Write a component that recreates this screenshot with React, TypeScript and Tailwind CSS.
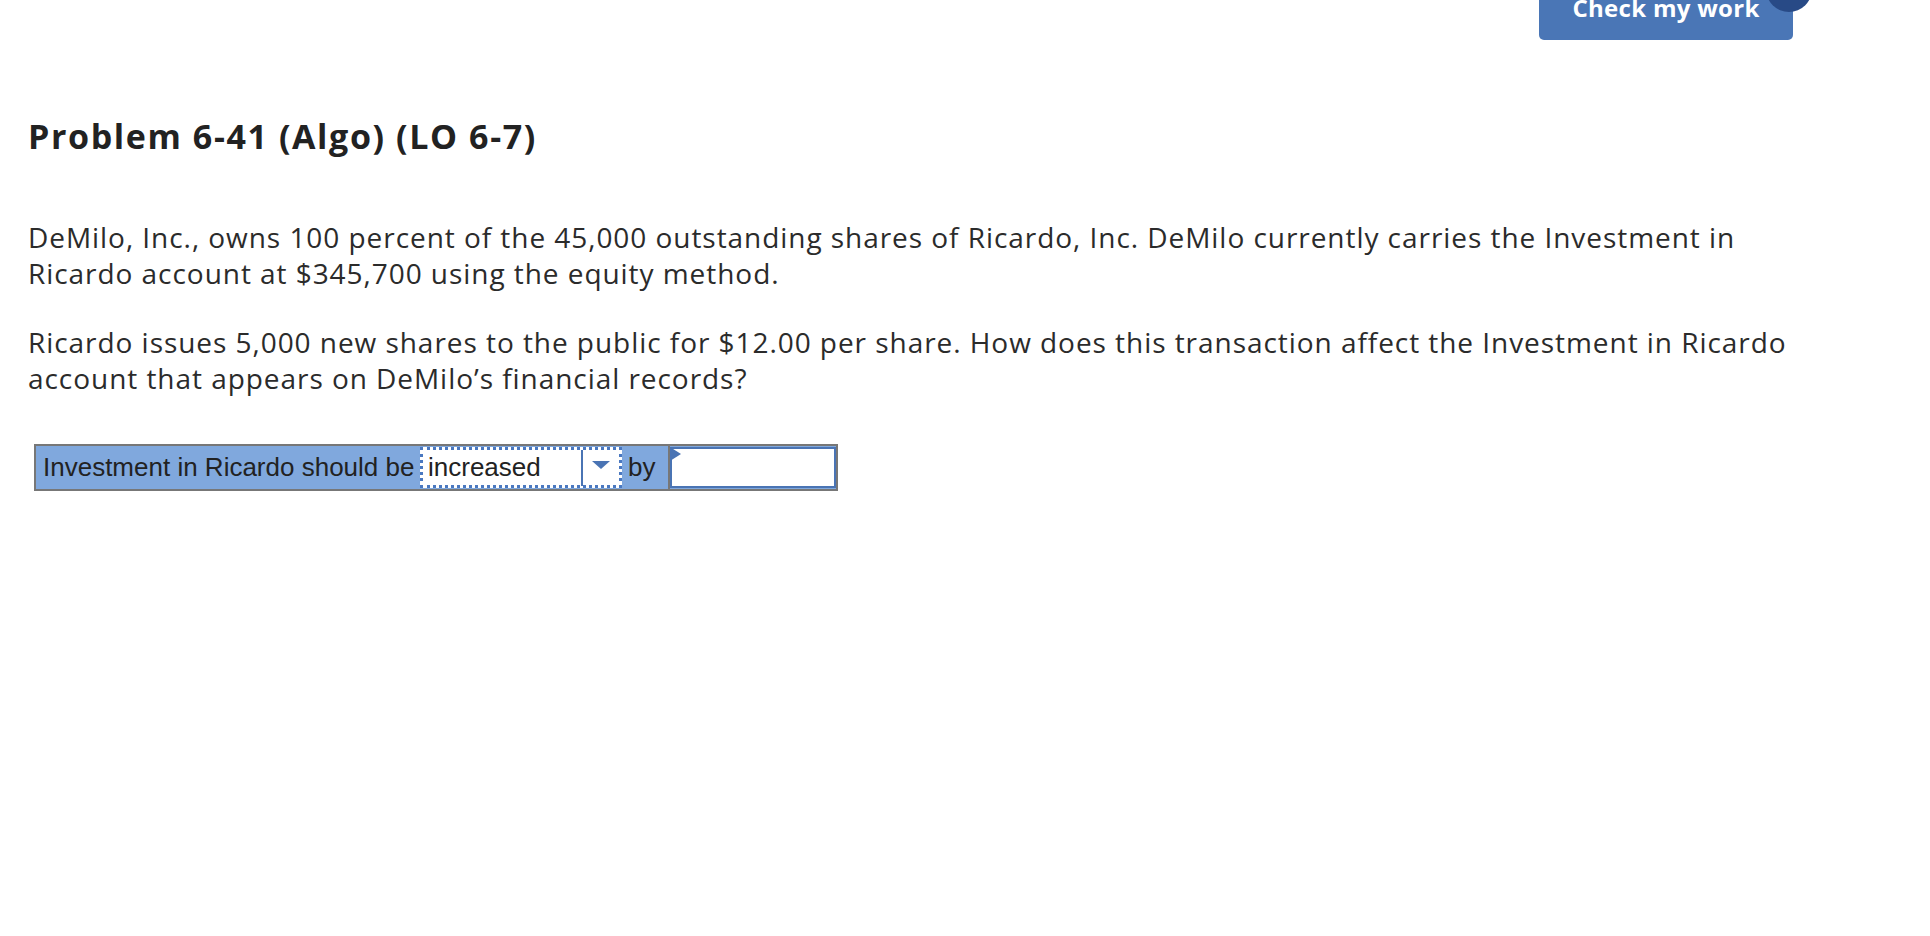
import React from "react";

const body = "font-['Open_Sans','Noto_Sans',sans-serif]";

export default function App() {
	return (
		<div className={`min-h-[936px] bg-white text-[#2b2b2b] ${body}`}>
			{/* top bar with the check button */}
			<div className="flex justify-end pr-[137px]">
				<div className="relative">
					<button
						type="button"
						className="flex h-[40px] w-[254px] items-start justify-center rounded-b-[5px] bg-[#4a76b6] text-[24px] font-bold leading-[18px] text-white"
					>
						<span className="-mt-[1px] tracking-[0.3px]">Check my work</span>
					</button>
					<span className="absolute -right-[19px] -top-[34px] h-[46px] w-[46px] rounded-full bg-[#284a86]" />
				</div>
			</div>

			<div className="pl-[28px]">
				<h1 className="mt-[76px] text-[34px] font-bold leading-[40px] tracking-[1.6px] text-[#222]">
					Problem 6-41 (Algo) (LO 6-7)
				</h1>

				<p className="mt-[63px] whitespace-nowrap text-[28px] leading-[36px] tracking-[0.95px]">
					DeMilo, Inc., owns 100 percent of the 45,000 outstanding shares of Ricardo, Inc. DeMilo currently carries the Investment in
					<br />
					Ricardo account at $345,700 using the equity method.
				</p>

				<p className="mt-[33px] whitespace-nowrap text-[28px] leading-[36px] tracking-[0.95px]">
					Ricardo issues 5,000 new shares to the public for $12.00 per share. How does this transaction affect the Investment in Ricardo
					<br />
					account that appears on DeMilo’s financial records?
				</p>

				<div className="ml-[6px] mt-[48px] inline-flex h-[47px] border-2 border-[#777] bg-[#80a8dd] font-['Liberation_Sans',Arial,sans-serif] text-[26px] text-[#222]">
					<div className="flex w-[384px] items-center pl-[7px]">Investment in Ricardo should be</div>
					<div className="my-px flex w-[202px] items-center border-[3px] border-dotted border-[#4a78c0] bg-white">
						<span className="flex-1 pl-[5px]">increased</span>
						<span className="h-[36px] w-[2px] self-start bg-[#4a74b4]" />
						<svg width="18" height="10" viewBox="0 0 18 10" className="mx-[9px] -mt-[4px]">
							<polygon points="0,0 18,0 9,8" fill="#4a74b4" />
						</svg>
					</div>
					<div className="flex w-[46px] items-center pl-[6px]">by</div>
					<div className="w-[2px] bg-[#777]" />
					<div className="relative my-px w-[166px] border-2 border-[#4a74b4] bg-white">
						<svg width="12" height="14" viewBox="0 0 12 14" className="absolute -left-[2px] -top-[2px]">
							<polygon points="0,0 11,7 0,14" fill="#4a74b4" />
						</svg>
						<input className="h-full w-full bg-transparent px-2 outline-none" aria-label="amount" />
					</div>
				</div>
			</div>
		</div>
	);
}
